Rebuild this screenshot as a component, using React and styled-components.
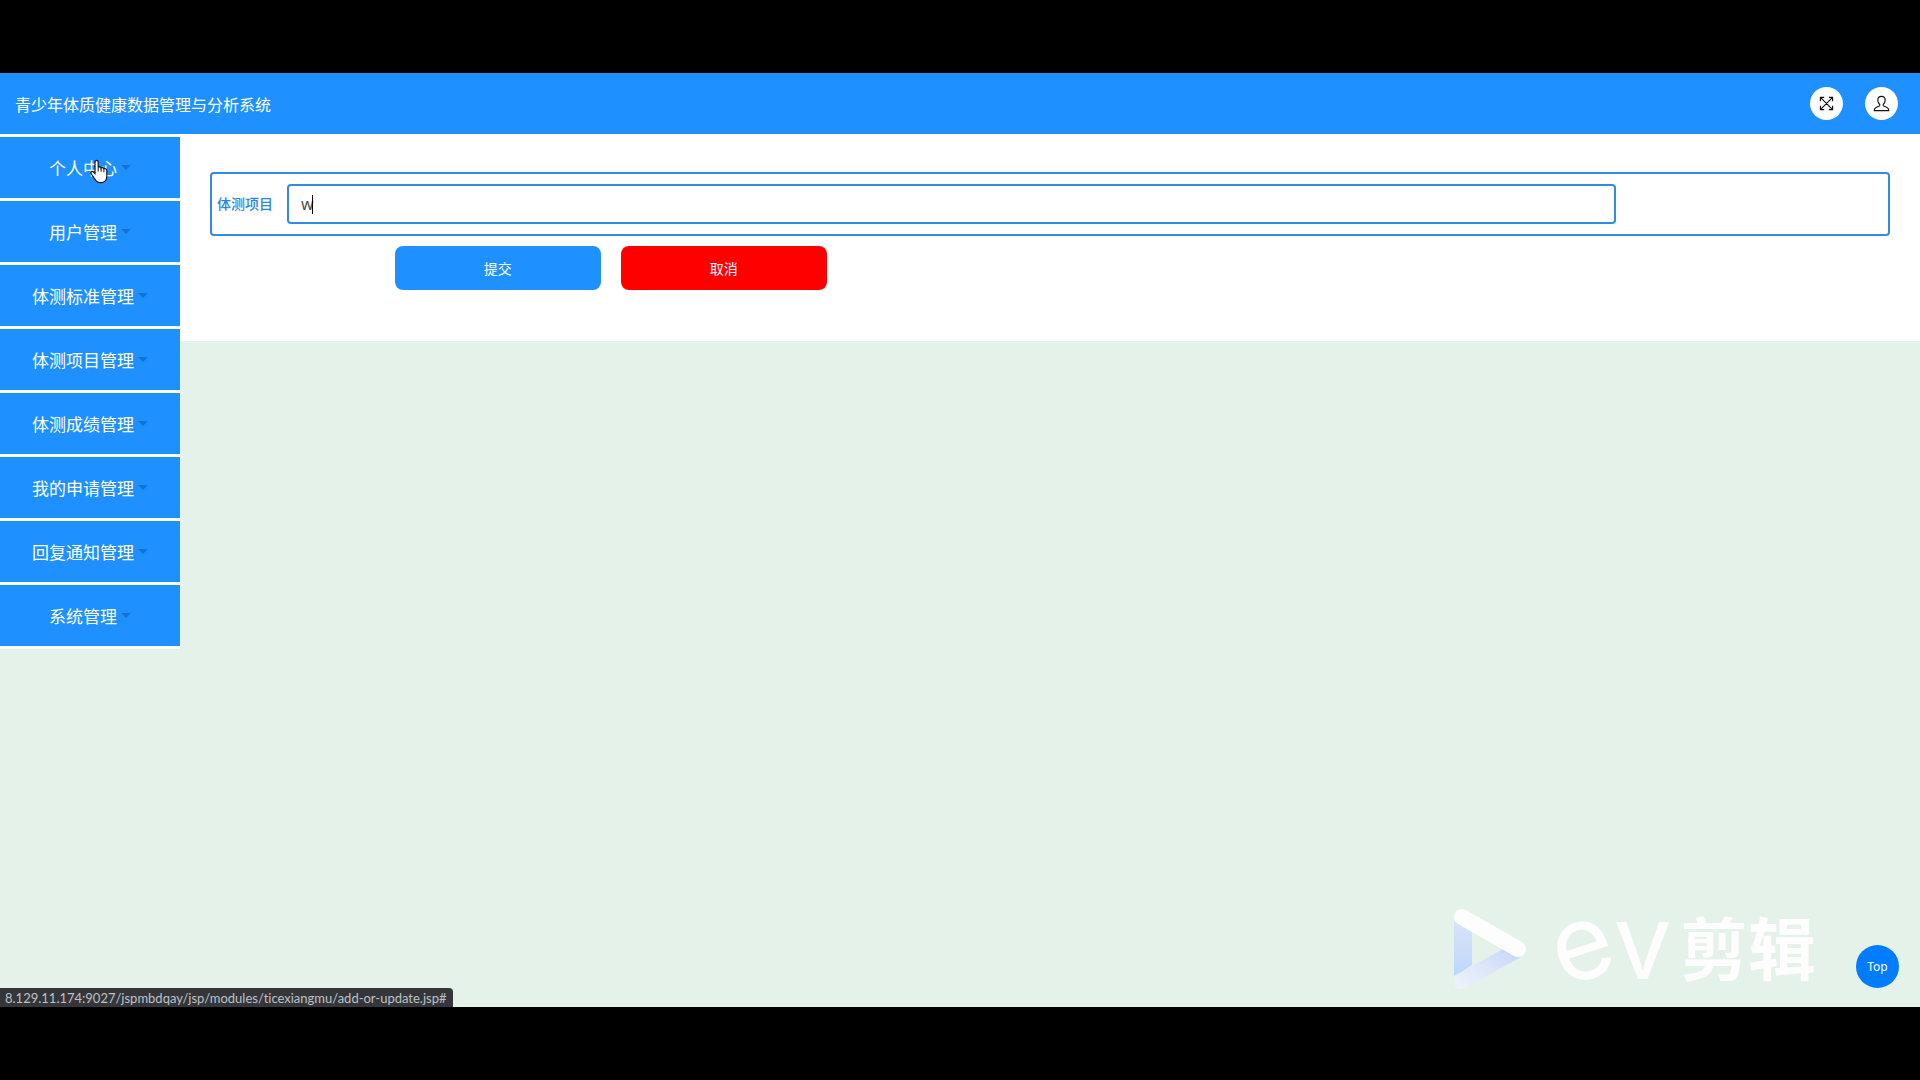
import React, { useState } from 'react'
import styled, { createGlobalStyle } from 'styled-components'

const GlobalStyle = createGlobalStyle`
*{
    box-sizing:border-box;
}
body{
    margin:0;
    background-color:#000;
    font-family:"Noto Sans","Noto Sans CJK SC",sans-serif;
}
button,input{
    font-family:inherit;
}
`
const Page = styled.div`
    min-height:100vh;
    display:flex;
    flex-direction:column;
    padding:73px 0;
    background-color:#000;
`
const Screen = styled.div`
    position:relative;
    flex:1;
    display:flex;
    flex-direction:column;
    background-color:#e5f2ea;
`
const Header = styled.header`
    display:flex;
    align-items:center;
    justify-content:space-between;
    height:61px;
    padding:0 22px 0 15px;
    background-color:#1e90ff;
`
const Title = styled.h1`
    margin:0;
    padding-top:2px;
    font-size:16px;
    font-weight:400;
    line-height:24px;
    color:#fff;
`
const Tools = styled.div`
    display:flex;
    gap:22px;
`
const RoundButton = styled.button`
    display:flex;
    align-items:center;
    justify-content:center;
    width:33px;
    height:33px;
    padding:0;
    border:0;
    border-radius:50%;
    background-color:#fff;
    color:#111;
    cursor:pointer;
`
const Body = styled.div`
    display:flex;
    align-items:flex-start;
`
const Sidebar = styled.nav`
    position:relative;
    flex:0 0 180px;
    display:flex;
    flex-direction:column;
    gap:3px;
    padding:3px 0;
    background-color:#fafffd;
`
const MenuLink = styled.a`
    display:flex;
    align-items:center;
    justify-content:center;
    gap:4px;
    height:61px;
    padding-top:2px;
    font-size:17px;
    line-height:26px;
    color:#fff;
    background-color:#1e90ff;
    text-decoration:none;
    &::after{
        content:"";
        margin-bottom:3px;
        border-top:5px solid #1473d0;
        border-left:5px solid transparent;
        border-right:5px solid transparent;
    }
`
const Pointer = styled.svg`
    position:absolute;
    left:89px;
    top:25px;
    pointer-events:none;
`
const Content = styled.main`
    flex:1;
    min-width:0;
    padding:38px 30px 51px;
    background-color:#fff;
`
const FormRow = styled.div`
    display:flex;
    align-items:center;
    height:64px;
    padding:0 10px 0 5px;
    border:2px solid #338ae3;
    border-radius:4px;
`
const Label = styled.label`
    flex:0 0 70px;
    font-size:14px;
    font-weight:500;
    line-height:20px;
    color:#2a83e0;
`
const Field = styled.div`
    position:relative;
    width:80%;
`
const Input = styled.input`
    display:block;
    width:100%;
    height:40px;
    padding:0 12px;
    border:2px solid #338ae3;
    border-radius:4px;
    outline:0;
    font-size:16px;
    color:#495057;
    background-color:#fff;
    caret-color:transparent;
`
const Caret = styled.span`
    position:absolute;
    left:25px;
    top:11px;
    width:1px;
    height:19px;
    background-color:#000;
`
const Actions = styled.div`
    display:flex;
    gap:20px;
    padding:10px 0 0 11%;
`
const ActionButton = styled.button`
    width:206px;
    height:44px;
    border:0;
    border-radius:8px;
    font-size:14px;
    color:#fff;
    background-color:${props => props.$color};
    cursor:pointer;
`
const Watermark = styled.div`
    position:absolute;
    right:104px;
    bottom:3px;
    display:flex;
    align-items:center;
    gap:26px;
    color:#fff;
    opacity:0.9;
`
const Brand = styled.div`
    display:flex;
    align-items:center;
    font-family:Inter,sans-serif;
    font-size:104px;
    line-height:84px;
    padding-bottom:16px;
`
const Tilted = styled.span`
    display:inline-block;
    transform:rotate(-18deg);
    transform-origin:50% 62%;
`
const BrandName = styled.span`
    margin-left:8px;
    padding-top:10px;
    font-family:"Noto Sans CJK SC",sans-serif;
    font-size:68px;
    font-weight:700;
`
const TopButton = styled.button`
    position:absolute;
    right:21px;
    bottom:19px;
    width:43px;
    height:43px;
    padding:0;
    border:0;
    border-radius:50%;
    font-size:12px;
    color:#fff;
    background-color:#007dff;
    cursor:pointer;
`
const StatusBar = styled.div`
    position:absolute;
    left:0;
    bottom:0;
    height:19px;
    padding:0 6px 0 5px;
    border-radius:0 4px 0 0;
    font-family:Lato,sans-serif;
    font-size:13px;
    font-variant-ligatures:none;
    line-height:20px;
    color:#bdc1c6;
    background-color:#35363a;
`

const menus = [
    '个人中心',
    '用户管理',
    '体测标准管理',
    '体测项目管理',
    '体测成绩管理',
    '我的申请管理',
    '回复通知管理',
    '系统管理',
]

function ExpandIcon() {
    return (
        <svg width="15" height="15" viewBox="0 0 16 16" fill="none" stroke="currentColor" strokeWidth="1.2">
            <path d="M1.500 1.500l13 13M14.500 1.500l-13 13M1.500 5.500v-4h4M10.500 1.500h4v4M14.500 10.500v4h-4M5.500 14.500h-4v-4" />
        </svg>
    )
}

function UserIcon() {
    return (
        <svg width="17" height="17" viewBox="0 0 18 18" fill="none" stroke="currentColor" strokeWidth="1.2">
            <path d="M9 1.400c-2.500 0-3.900 1.700-3.900 4 0 1.900.8 3.600 2 4.500v1.500c-.5.8-4.300 1.200-5.300 3.200-.3.600-.4 1.200-.4 1.900h15.200c0-.7-.1-1.300-.4-1.900-1-2-4.800-2.400-5.300-3.200V9.900c1.200-.9 2-2.600 2-4.500 0-2.300-1.400-4-3.900-4z" />
        </svg>
    )
}

function HandPointer() {
    return (
        <Pointer width="20" height="26" viewBox="0 0 20 26" aria-hidden="true">
            <path
                d="M6 3c0-2.300 3.200-2.300 3.200 0v5.500c.5-1 2.800-.8 2.900.7.700-1 2.700-.6 2.800.8.900-.8 2.900-.2 2.900 1.500v5.500c0 4.200-2.200 6.700-6 6.700-3.200 0-4.600-1.200-6-3.700L2.200 14.800c-1.100-1.900.9-3.200 2.300-1.700L6 14.600z"
                fill="#fff"
                stroke="#111"
                strokeWidth="1.2"
            />
            <path d="M9.200 8.500v4M12.100 9.500v3.300M14.900 10.500v2.800" stroke="#111" strokeWidth="1" />
        </Pointer>
    )
}

function PlayLogo() {
    return (
        <svg width="74" height="84" viewBox="0 0 74 84">
            <defs>
                <linearGradient id="side" x1="0" y1="0" x2="0" y2="1">
                    <stop offset="0" stopColor="#d9e2fb" />
                    <stop offset="1" stopColor="#b9d4ff" />
                </linearGradient>
                <linearGradient id="base" x1="1" y1="0" x2="0" y2="1">
                    <stop offset="0" stopColor="#c0d1fc" />
                    <stop offset="0.5" stopColor="#dce6fb" />
                    <stop offset="1" stopColor="#f0f5ff" />
                </linearGradient>
            </defs>
            <path d="M1 14l18 6v38L1 70z" fill="url(#side)" />
            <path d="M1 69L50 42l18 8L12 81c-5 3-10 1-10-4z" fill="url(#base)" />
            <path d="M9 10l56 32" stroke="#fff" strokeWidth="16" strokeLinecap="round" />
        </svg>
    )
}

function App() {
    const [project, setProject] = useState('w')
    return (
        <Page>
            <GlobalStyle />
            <Screen>
                <Header>
                    <Title>青少年体质健康数据管理与分析系统</Title>
                    <Tools>
                        <RoundButton type="button"><ExpandIcon /></RoundButton>
                        <RoundButton type="button"><UserIcon /></RoundButton>
                    </Tools>
                </Header>
                <Body>
                    <Sidebar>
                        {
                            menus.map((e) => (
                                <MenuLink key={e} href="#">{e}</MenuLink>
                            ))
                        }
                        <HandPointer />
                    </Sidebar>
                    <Content>
                        <FormRow>
                            <Label htmlFor="project">体测项目</Label>
                            <Field>
                                <Input id="project" value={project} onChange={(e) => setProject(e.target.value)} />
                                <Caret />
                            </Field>
                        </FormRow>
                        <Actions>
                            <ActionButton type="button" $color="#1e90ff">提交</ActionButton>
                            <ActionButton type="button" $color="#ff0000">取消</ActionButton>
                        </Actions>
                    </Content>
                </Body>
                <Watermark>
                    <PlayLogo />
                    <Brand>
                        <Tilted>e</Tilted>v<BrandName>剪辑</BrandName>
                    </Brand>
                </Watermark>
                <TopButton type="button">Top</TopButton>
                <StatusBar>8.129.11.174:9027/jspmbdqay/jsp/modules/ticexiangmu/add-or-update.jsp#</StatusBar>
            </Screen>
        </Page>
    )
}

export default App
